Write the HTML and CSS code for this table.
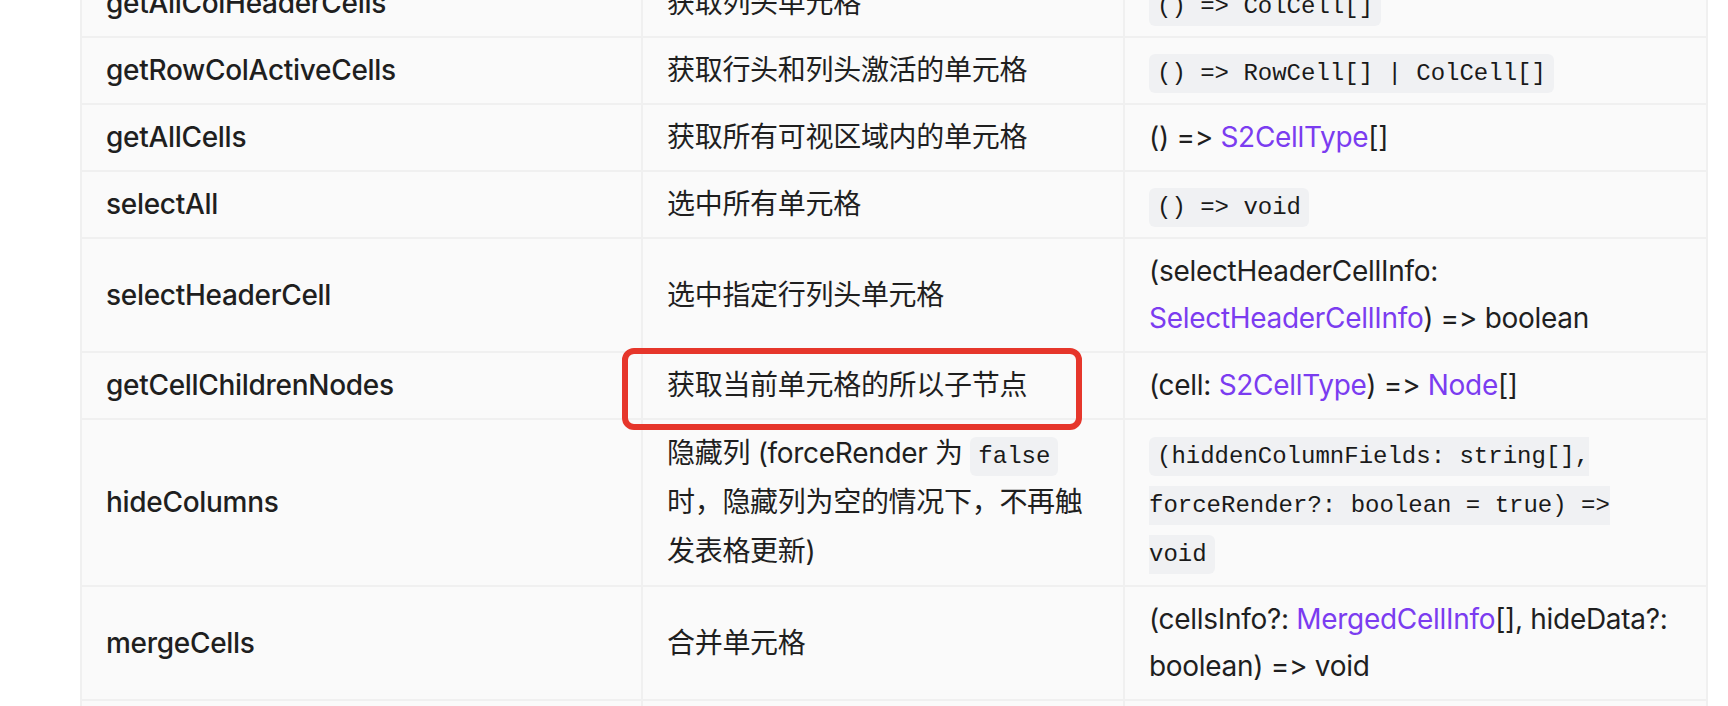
FILE: index.html
```html
<!DOCTYPE html>
<html lang="zh-CN">
<head>
    <meta charset="UTF-8">
    <title>S2 API</title>
    <link rel="stylesheet" href="styles.css">
</head>
<body>

    <!-- tabela de API (continuação) -->
    <div class="doc">
        <table class="api">
            <colgroup>
                <col class="c-name">
                <col class="c-desc">
                <col class="c-type">
            </colgroup>
            <tbody>
                <tr>
                    <td>getAllColHeaderCells</td>
                    <td>获取列头单元格</td>
                    <td><code>() =&gt; ColCell[]</code></td>
                </tr>
                <tr>
                    <td>getRowColActiveCells</td>
                    <td>获取行头和列头激活的单元格</td>
                    <td><code>() =&gt; RowCell[] | ColCell[]</code></td>
                </tr>
                <tr>
                    <td>getAllCells</td>
                    <td>获取所有可视区域内的单元格</td>
                    <td>() =&gt; <a class="tipo" href="#">S2CellType</a>[]</td>
                </tr>
                <tr>
                    <td>selectAll</td>
                    <td>选中所有单元格</td>
                    <td><code>() =&gt; void</code></td>
                </tr>
                <tr>
                    <td>selectHeaderCell</td>
                    <td>选中指定行列头单元格</td>
                    <td>(selectHeaderCellInfo: <a class="tipo" href="#">SelectHeaderCellInfo</a>) =&gt; boolean</td>
                </tr>
                <tr>
                    <td>getCellChildrenNodes</td>
                    <td class="marcado">获取当前单元格的所以子节点<div class="caixa"></div></td>
                    <td>(cell: <a class="tipo" href="#">S2CellType</a>) =&gt; <a class="tipo" href="#">Node</a>[]</td>
                </tr>
                <tr class="longa">
                    <td>hideColumns</td>
                    <td>隐藏列 (forceRender 为 <code>false</code> 时，隐藏列为空的情况下，不再触发表格更新)</td>
                    <td><code>(hiddenColumnFields: string[], forceRender?: boolean = true) =&gt; void</code></td>
                </tr>
                <tr>
                    <td>mergeCells</td>
                    <td>合并单元格</td>
                    <td>(cellsInfo?: <a class="tipo" href="#">MergedCellInfo</a>[], hideData?: boolean) =&gt; void</td>
                </tr>
                <tr>
                    <td>unmergeCell</td>
                    <td>取消合并单元格</td>
                    <td>(removedCells: MergedCell) =&gt; void</td>
                </tr>
            </tbody>
        </table>
    </div>

</body>
</html>
```

FILE: styles.css
```css
body {
    margin: 0;
    background-color: #ffffff;
    color: #1f1f1f;
    font-family: Inter, "Noto Sans CJK SC", sans-serif;
    font-size: 28px;
    letter-spacing: -0.3px;
    font-feature-settings: "calt" 0;
    font-variant-ligatures: none;
    overflow: hidden;
}

.doc {
    padding-left: 80px;
    margin-top: -31px;
}

.api {
    border-collapse: collapse;
    table-layout: fixed;
    width: 1626px;
    background-color: #fafafa;
}

.c-name {
    width: 561px;
}

.c-desc {
    width: 482px;
}

.c-type {
    width: 583px;
}

.api td {
    border: 2px solid #f0f0f0;
    padding: 9px 26px 9px 24px;
    line-height: 47px;
    vertical-align: middle;
}

.api td:first-child {
    font-weight: 500;
}

.api .longa td {
    line-height: 49px;
}

code {
    font-family: "Liberation Mono", monospace;
    font-size: 24px;
    line-height: 24px;
    letter-spacing: 0;
    color: #1a1a1a;
    background-color: #f0f1f3;
    padding: 6px 8px;
    border-radius: 6px;
}

.tipo {
    color: #7b3cf0;
    text-decoration: none;
}

.marcado {
    position: relative;
}

.caixa {
    position: absolute;
    left: -21px;
    top: -5px;
    width: 460px;
    height: 82px;
    border: 6px solid #e6362b;
    border-radius: 12px;
    box-sizing: border-box;
}
```
